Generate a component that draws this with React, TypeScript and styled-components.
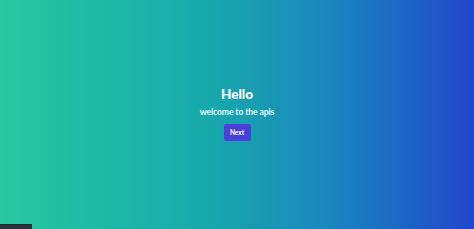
import styled, { createGlobalStyle } from 'styled-components';

const GlobalStyle = createGlobalStyle`
  html, body {
    margin: 0;
    padding: 0;
    height: 100%;
  }
  body {
    font-family: Lato, 'Open Sans', sans-serif;
  }
  #root {
    height: 100%;
  }
`;

const App = () => {
  return (
    <>
      <GlobalStyle />
      <Page>
        <Hero>
          <Title>Hello</Title>
          <Subtitle>welcome to the apis</Subtitle>
          <NextButton type="button">Next</NextButton>
        </Hero>
        <StatusBar />
      </Page>
    </>
  );
};

export default App;

const Page = styled.div`
  position: relative;
  width: 100%;
  height: 229px;
  display: flex;
  align-items: center;
  justify-content: center;
  background: linear-gradient(90deg, #27c9a0 0%, #17a8ac 45%, #1a86bf 70%, #2146cc 100%);
`;

const Hero = styled.div`
  display: flex;
  flex-direction: column;
  align-items: center;
  margin-top: -3px;
`;

const Title = styled.h1`
  margin: 0;
  font-size: 13.5px;
  font-weight: 900;
  color: #ffffff;
  line-height: 16px;
`;

const Subtitle = styled.p`
  margin: 4px 0 0;
  font-size: 8.7px;
  font-weight: 700;
  letter-spacing: -0.15px;
  color: #e3fbff;
  line-height: 11px;
`;

const NextButton = styled.button`
  margin-top: 7px;
  width: 27px;
  height: 17px;
  padding: 0;
  border: none;
  border-radius: 2px;
  background: #4b3fd9;
  color: #ffffff;
  font-family: Lato, sans-serif;
  font-size: 6.5px;
  font-weight: 700;
  cursor: pointer;
`;

const StatusBar = styled.div`
  position: absolute;
  left: 0;
  bottom: 0;
  width: 32px;
  height: 4px;
  background: #2a3338;
  border-top: 1px solid #1f2a2e;
`;
